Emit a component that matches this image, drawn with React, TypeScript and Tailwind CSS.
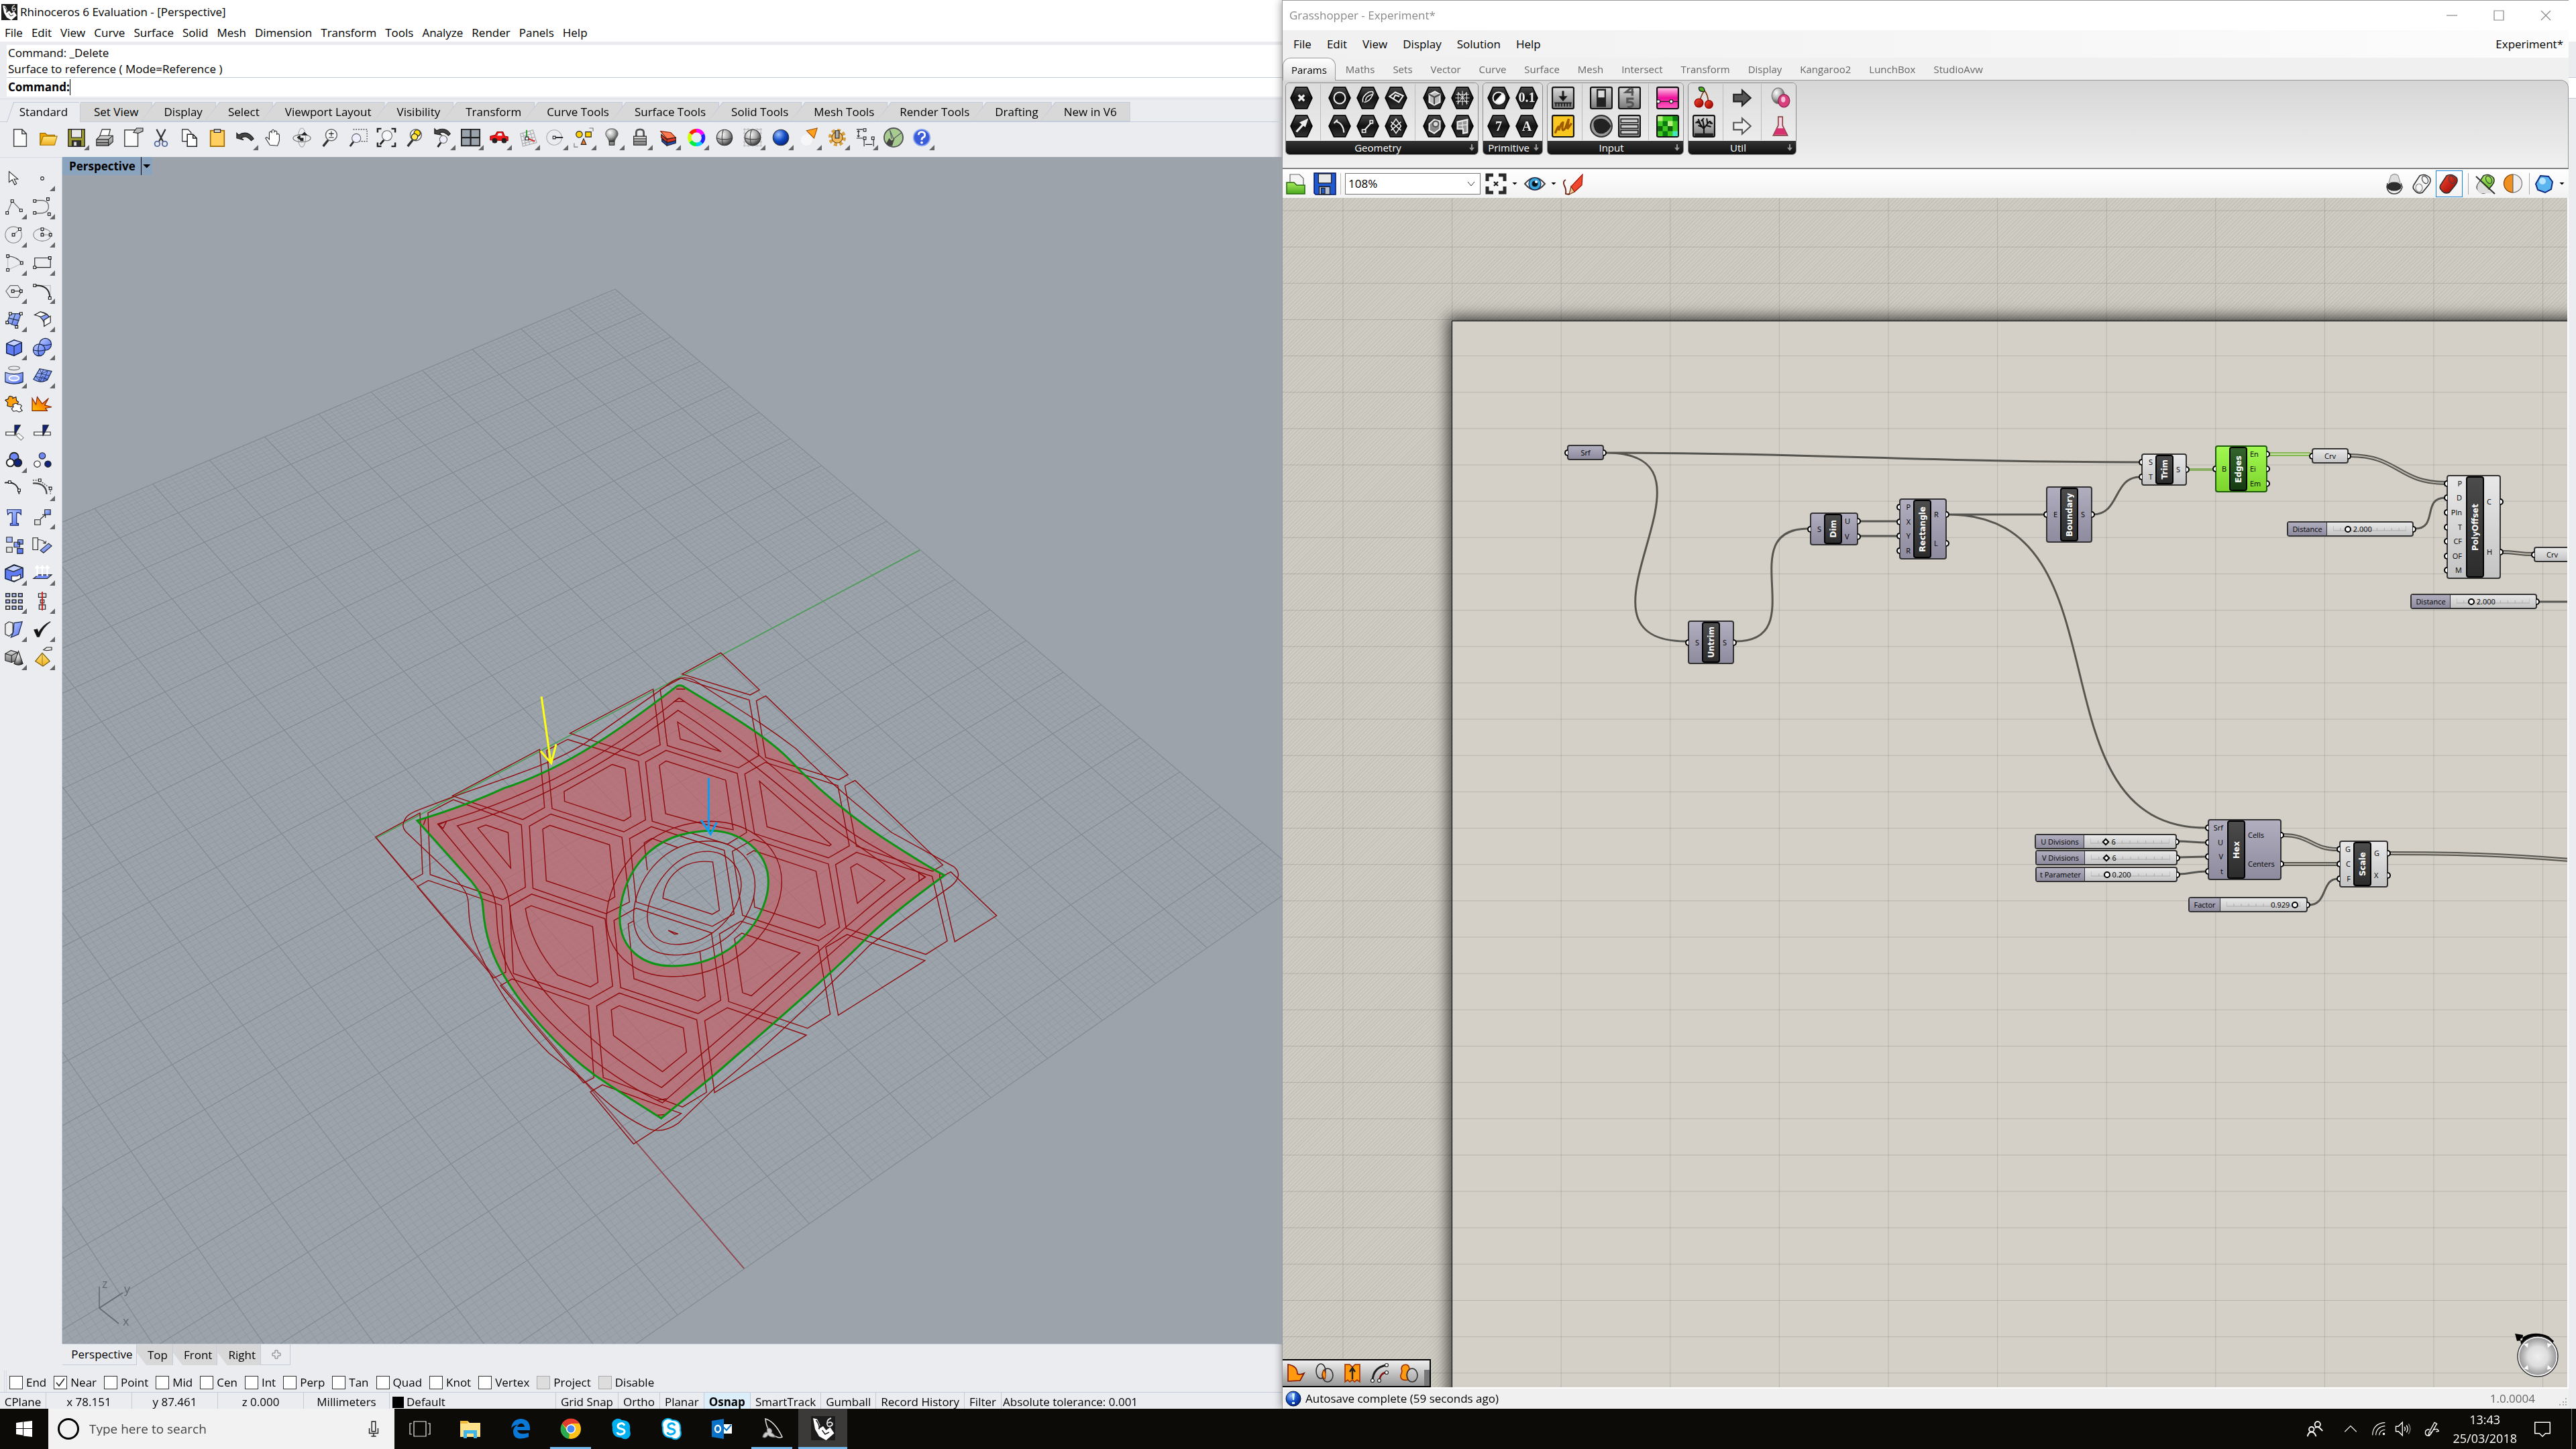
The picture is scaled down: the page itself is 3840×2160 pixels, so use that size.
import type { ReactNode } from 'react';

const Icon = ({ children, size = 'size-8' }: { children: ReactNode; size?: string }) => (
  <svg viewBox="0 0 32 32" className={`${size} shrink-0 overflow-visible`} fill="none" stroke="#222" strokeWidth="1.2">
    {children}
  </svg>
);

// shared gradients
const Defs = () => (
  <svg className="absolute size-0" aria-hidden="true">
    <defs>
      <radialGradient id="gray" cx=".35" cy=".3" r=".8"><stop offset="0" stopColor="#fff" /><stop offset=".5" stopColor="#aaa" /><stop offset="1" stopColor="#222" /></radialGradient>
      <radialGradient id="blue" cx=".35" cy=".3" r=".8"><stop offset="0" stopColor="#9cc0ff" /><stop offset=".5" stopColor="#1450c8" /><stop offset="1" stopColor="#001a70" /></radialGradient>
      <linearGradient id="peri" x1="0" y1="0" x2="1" y2="1"><stop offset="0" stopColor="#bfceff" /><stop offset="1" stopColor="#4f6ff0" /></linearGradient>
      <linearGradient id="fire" x1="0" y1="1" x2="1" y2="0"><stop offset="0" stopColor="#ffc400" /><stop offset="1" stopColor="#f04010" /></linearGradient>
      <linearGradient id="steel" x1="0" y1="0" x2="0" y2="1"><stop offset="0" stopColor="#ddd" /><stop offset="1" stopColor="#777" /></linearGradient>
      <linearGradient id="hex" x1="0" y1="0" x2="0" y2="1"><stop offset="0" stopColor="#4a4a4a" /><stop offset=".5" stopColor="#111" /><stop offset="1" stopColor="#333" /></linearGradient>
      <linearGradient id="gold" x1="0" y1="0" x2="0" y2="1"><stop offset="0" stopColor="#ffe680" /><stop offset="1" stopColor="#f0b020" /></linearGradient>
      <linearGradient id="green" x1="0" y1="0" x2="0" y2="1"><stop offset="0" stopColor="#a8ec60" /><stop offset="1" stopColor="#4aa81c" /></linearGradient>
      <linearGradient id="pink" x1="0" y1="0" x2="0" y2="1"><stop offset="0" stopColor="#ffd0ec" /><stop offset=".5" stopColor="#f0109c" /><stop offset="1" stopColor="#ff60c0" /></linearGradient>
      <linearGradient id="red" x1="0" y1="0" x2="1" y2="1"><stop offset="0" stopColor="#ff4a30" /><stop offset="1" stopColor="#8c0000" /></linearGradient>
      <radialGradient id="dial"><stop offset="0" stopColor="#eee" /><stop offset=".5" stopColor="#ddd" /><stop offset="1" stopColor="#8c8c8c" /></radialGradient>
    </defs>
  </svg>
);

const Magnifier = () => (
  <>
    <path d="M13 20 5 30" stroke="#333" strokeWidth="3.5" />
    <circle cx="18" cy="12" r="9" fill="#f6f8fa" stroke="#666" strokeWidth="1.6" />
  </>
);
const Sphere = ({ fill = 'url(#gray)' }: { fill?: string }) => (
  <>
    <circle cx="16" cy="16" r="12.5" fill={fill} stroke="#333" />
    {fill === 'url(#gray)' && <path d="M4 17q12 4 24 0M14 4q-4 12 0 24" stroke="#444" />}
  </>
);

type Tool = { name: string; more?: boolean; art: ReactNode };

const standardTools: Tool[] = [
  { name: 'New', art: <path d="M6 3h13l7 7v20H6zM19 3v7h7" fill="#fafafa" stroke="#444" strokeWidth="1.6" /> },
  { name: 'Open', art: <><path d="M3 28V9h8l3 3h12v4" fill="#f0a800" stroke="#8a6200" /><path d="m3 28 5-14h22l-4 14z" fill="url(#gold)" stroke="#a87800" /></> },
  { name: 'Save', more: true, art: <><path d="M3 3h26v27H3z" fill="#9a9a30" stroke="#333" strokeWidth="1.6" /><path d="M8 3h16v13H8z" fill="#e8e8e8" /><path d="M9 21h14v9H9z" fill="#333" /><path d="M12 23h4v6h-4z" fill="#ddd" stroke="none" /></> },
  { name: 'Print', art: <><path d="m8 14 4-11h13l-3 11z" fill="#fff" /><path d="m3 19 6-6h20v10l-7 6H3z" fill="url(#steel)" /><path d="M3 19h19l7-6M22 19v10M3 24h19" /></> },
  { name: 'Properties', art: <><path d="M3 4h16l5 6v20H3z" fill="#fafafa" stroke="#444" strokeWidth="1.6" /><path d="m17 8 5-7h10v5l-7 3z" fill="#bbb" /></> },
  { name: 'Cut', art: <><path d="M9 3 19 22M23 3 13 22" stroke="#333" strokeWidth="2.4" /><circle cx="10" cy="26" r="4" stroke="#5568a0" strokeWidth="2" /><circle cx="22" cy="26" r="4" stroke="#5568a0" strokeWidth="2" /></> },
  { name: 'Copy', art: <><path d="M5 3h9l5 5v14H5z" fill="#fafafa" /><path d="M13 11h9l6 6v13H13zM22 11v6h6" fill="#fff" strokeWidth="1.6" /></> },
  { name: 'Paste', art: <><path d="M5 5h22v25H5z" fill="#ffcf60" stroke="#a06a00" strokeWidth="1.8" /><path d="M11 3h10v5H11z" fill="#ccc" /></> },
  { name: 'Undo', more: true, art: <path d="M2 17V9l3 3q14-9 24 6l-4 3q-8-10-16-4l4 3z" fill="#444" stroke="#222" /> },
  { name: 'Pan', art: <path d="M10 28 3 17q2-3 6 2V8q2-3 4 0V5q2-3 4 0v2q2-3 4 0v4q3-2 4 1v9l-3 8z" fill="#fff" stroke="#333" /> },
  { name: 'Rotate View', art: <><ellipse cx="16" cy="16" rx="6" ry="15" stroke="#aaa" /><ellipse cx="16" cy="17" rx="14" ry="6" stroke="#777" /><path d="m9 16 4-3v6zM20 8l4 4h-8zM14 17h4v4h-4z" fill="#222" /></> },
  { name: 'Zoom Dynamic', art: <><Magnifier /><path d="M14 10h8M18 6v8M14 16h8" stroke="#222" /></> },
  { name: 'Zoom Window', art: <><path d="M8 3h22v19H18" stroke="#333" strokeDasharray="2 2" /><path d="M9 22 3 30" stroke="#333" strokeWidth="3" /><circle cx="13" cy="17" r="7" fill="#eef" stroke="#666" /></> },
  { name: 'Zoom Extents', art: <><path d="M2 8V2h6M24 2h6v6M2 24v6h6M24 30h6v-6" stroke="#222" strokeWidth="2.6" /><path d="M12 20 6 27" strokeWidth="3" /><circle cx="17" cy="13" r="8" fill="#f6f8fa" stroke="#666" /></> },
  { name: 'Zoom Selected', art: <><Magnifier /><circle cx="20" cy="9" r="5" fill="#ffd800" /><circle cx="16" cy="15" r="5" fill="#ffe850" /></> },
  { name: 'Undo View', more: true, art: <><path d="M3 10V2l3 3q14-7 22 5l-3 3q-8-8-14-4l3 3z" fill="#444" /><path d="m13 24-5 7" strokeWidth="3" /><circle cx="17" cy="19" r="6" fill="#eef" stroke="#666" /></> },
  { name: 'Four Viewports', more: true, art: <><path d="M1 3h29v26H1z" fill="#9aa2ac" strokeWidth="2" /><path d="M1 16h29M15.500 3v26" strokeWidth="2.400" /></> },
  { name: 'Car', more: true, art: <><path d="M2 20v-6l8-2 3-5h9l3 7 5 1v6z" fill="#f01818" stroke="#900" /><circle cx="9" cy="21" r="3.500" fill="#222" /><circle cx="24" cy="21" r="3.500" fill="#222" /><path d="M15 9h5l1 4h-8z" fill="#dff" stroke="none" /></> },
  { name: 'Set CPlane', more: true, art: <><path d="m5 10 20-6 6 20-22 6zM9 9l5 20M14 7l6 20M20 5l6 20M6 15l21-6M7 21l21-6M8 26l21-6" stroke="#aaa" /><path d="M15 17V4" stroke="#2a9a2a" strokeWidth="2" /><path d="m15 17 13 5" stroke="#d22" strokeWidth="2" /><path d="M13 15h5v5h-5z" fill="#fff" /></> },
  { name: 'Set View', more: true, art: <><circle cx="14" cy="16" r="12" stroke="#aaa" /><path d="M14 16h14" strokeWidth="2" /><path d="M12 14h4v4h-4z" fill="#fff" /></> },
  { name: 'Object Snap', more: true, art: <><circle cx="9" cy="11" r="5" fill="#ffd000" /><path d="M19 7h9v8h-9z" fill="#ffd000" /><path d="m12 27 4-9 4 9z" fill="#ea7a30" /><path d="M25 1h6v5M1 25v6h6" stroke="#777" /></> },
  { name: 'Lights', more: true, art: <><path d="M9 16q-4-4-2-9 3-5 9-5t9 5q2 5-2 9l-3 6h-8z" fill="url(#gray)" stroke="#666" /><path d="M12 22h8v6h-8z" fill="#888" /></> },
  { name: 'Lock', more: true, art: <><path d="M10 14V8q0-5 6-5t6 5v6" stroke="#555" strokeWidth="3" /><path d="M6 14h20v14H6z" fill="url(#steel)" /><path d="M6 18h20M6 22h20" stroke="#444" /></> },
  { name: 'Layers', more: true, art: <><path d="m4 6 16 2 8 8-14 2z" fill="#ff7a50" stroke="#902000" /><path d="m5 11 9 8v5l-9-8zM14 19l14-3v5l-14 3z" fill="#e03020" /><path d="m6 18 8 7v4l-8-7zM14 25l14-4v4l-14 4z" fill="#2848b0" /></> },
  { name: 'Object Properties', more: true, art: <g strokeWidth="6"><path d="M16 5a11 11 0 0 1 10 6" stroke="#f0f" /><path d="M26 11a11 11 0 0 1-2 13" stroke="#22f" /><path d="M24 24a11 11 0 0 1-8 3" stroke="#0cf" /><path d="M16 27a11 11 0 0 1-9-5" stroke="#0e4" /><path d="M7 22a11 11 0 0 1 0-12" stroke="#cf0" /><path d="M7 10a11 11 0 0 1 9-5" stroke="#f20" /></g> },
  { name: 'Shade', art: <Sphere /> },
  { name: 'Shade Selected', more: true, art: <><path d="M1 3h30M1 9h30M1 16h30M1 23h30M1 29h30M3 1v30M9 1v30M16 1v30M23 1v30M29 1v30" stroke="#bbb" /><Sphere /></> },
  { name: 'Render', more: true, art: <Sphere fill="url(#blue)" /> },
  { name: 'Spotlight', more: true, art: <><circle cx="12" cy="20" r="9" fill="#f6f6f8" stroke="none" /><path d="m12 5 17-4-5 16z" fill="#ffa020" stroke="#a05000" /></> },
  { name: 'Options', more: true, art: <><circle cx="16" cy="16" r="11" stroke="#d8a040" strokeWidth="6" strokeDasharray="5 3.600" /><circle cx="16" cy="16" r="8.500" fill="#f0b860" stroke="#7a5000" /><path d="M13 5h6v12h-6z" fill="#aaa" /></> },
  { name: 'Dimension', more: true, art: <><path d="M2 3h10M2 17h10M5 5v10M3 7l2-2 2 2M3 13l2 2 2-2M14 19v11M29 19v11M16 27h11" /><path d="M13 2h4v4h-4zM13 15h4v4h-4zM26 15h4v4h-4z" fill="#fff" /></> },
  { name: 'Grasshopper', art: <><circle cx="16" cy="16" r="15" fill="#a8cc90" stroke="#555" strokeWidth="2" /><path d="m4 26 5-9 4 4 5-4-2 5-2 7q-5 1-10-3z" fill="#444" stroke="none" /><path d="m13 18-3-14 6 14L29 8" stroke="#556" /></> },
  { name: 'Help', more: true, art: <><circle cx="16" cy="16" r="13" fill="#3a5cd8" stroke="#8ca4f0" strokeWidth="2" /><path d="M11 12q0-5 5-5t5 5q0 3-3 4-2 1-2 4" stroke="#fff" strokeWidth="3" /><circle cx="16" cy="24" r="2" fill="#fff" stroke="none" /></> },
];

const sq = (x: number, y: number) => <path d={`M${x - 2} ${y - 2}h4v4h-4z`} fill="#fff" stroke="#111" />;

const sideTools: Tool[] = [
  { name: 'Select', art: <path d="M8 5v17l5-4 4 8 3-2-4-7h6z" fill="#fff" /> },
  { name: 'Point', more: true, art: <circle cx="16" cy="16" r="2.500" fill="#fff" /> },
  { name: 'Polyline', more: true, art: <><path d="m5 26 8-19 14 15" stroke="#666" />{sq(5, 26)}{sq(13, 7)}{sq(27, 22)}</> },
  { name: 'Curve', more: true, art: <><path d="M4 7q22-4 22 9T4 26" stroke="#555" />{sq(4, 7)}{sq(25, 4)}{sq(4, 26)}{sq(27, 28)}</> },
  { name: 'Circle', more: true, art: <><circle cx="15" cy="16" r="13" stroke="#888" /><path d="m15 16 10-9" stroke="#888" />{sq(15, 16)}{sq(25, 7)}</> },
  { name: 'Ellipse', more: true, art: <><ellipse cx="16" cy="16" rx="14" ry="10" stroke="#888" /><path d="M16 7v9h13" stroke="#888" />{sq(16, 7)}{sq(16, 16)}{sq(29, 16)}</> },
  { name: 'Arc', more: true, art: <><path d="M6 5v22l22-10" stroke="#bbb" /><path d="M6 5q16 1 22 12" stroke="#444" />{sq(6, 5)}{sq(6, 27)}{sq(28, 16)}</> },
  { name: 'Rectangle', more: true, art: <><path d="M4 8h25v15H4z" />{sq(28, 8)}{sq(4, 23)}</> },
  { name: 'Polygon', more: true, art: <><path d="m3 16 7-9h12l6 9-6 10H10z" stroke="#666" /><path d="M14 16h13" />{sq(14, 16)}{sq(27, 16)}</> },
  { name: 'Fillet', more: true, art: <><path d="M4 7h25v20" stroke="#bbb" /><path d="M4 7q24-1 24 20" strokeWidth="2" />{sq(4, 7)}{sq(28, 27)}</> },
  { name: 'Surface', more: true, art: <><path d="M10 7h17l-7 20-15-6z" fill="url(#peri)" stroke="#234" /><path d="m18 7-6 18M7 14l17 4" stroke="#234" />{sq(10, 7)}{sq(27, 7)}{sq(5, 21)}{sq(20, 28)}</> },
  { name: 'Loft', more: true, art: <><path d="m4 9 9-5q14 2 16 14l-10 9q0-9-4-12Q12 10 4 9z" fill="url(#peri)" /><path d="m4 9 9-5 10 4-9 4zM19 27V17l10-6v10z" fill="#fff" /></> },
  { name: 'Box', more: true, art: <><path d="m4 10 12-6 12 4v15l-12 6-12-4z" fill="#5f7cf2" stroke="#124" strokeWidth="1.600" /><path d="m5 10 11-5 11 3-11 5z" fill="#c4d0ff" stroke="none" /><path d="m4 10 12 4v15M16 14l12-6" stroke="#124" /></> },
  { name: 'Boolean', more: true, art: <><circle cx="21" cy="11" r="9.500" fill="url(#peri)" stroke="#124" /><circle cx="11" cy="20" r="9.500" fill="url(#peri)" stroke="#124" /><path d="M2 20q9 3 18 0M11 11q-3 9 0 18M12 11q9 3 18 0" stroke="#124" /></> },
  { name: 'Project', more: true, art: <><ellipse cx="16" cy="4" rx="9" ry="3" stroke="#777" /><path d="M2 11q14 5 28 0v15q-14 6-28 0z" fill="url(#peri)" stroke="#124" /><ellipse cx="16" cy="20" rx="8" ry="4" fill="#a9bcff" stroke="#fff" strokeWidth="2" /></> },
  { name: 'Mesh', more: true, art: <><path d="m12 5 19 4-7 14q-10 6-22-1z" fill="url(#peri)" stroke="#124" /><path d="m18 6-8 19M25 8l-8 18M9 12l18 4M5 17l19 5M12 5l3 8 10-5M5 17l8 8 3-8 8 5" stroke="#124" strokeWidth=".8" /></> },
  { name: 'Join', art: <><path d="m2 10 5-2q0-5 4-4t3 3l5-2 1 6 3 2-2 4-5 2-5 2-6-2 1-5z" fill="#ffa010" /><path d="m14 17 5-2 3 2q4-1 6 2l-2 4 3 4-5 2-4-2-5 1-3-4 3-3z" fill="#fff" /></> },
  { name: 'Explode', art: <path d="M0 27V7l6 10L8 5l8 11L26 7l-6 11 11 3-10 2 3 4z" fill="url(#fire)" stroke="#802000" /> },
  { name: 'Trim', art: <><path d="M3 16h16v5H3z" fill="#fff" /><path d="m19 21 4-3 8 7-4 4z" stroke="#888" fill="#fff" /><path d="M17 5h9l-9 15z" fill="#10247c" /></> },
  { name: 'Split', art: <><path d="M3 16h26v5H3z" fill="#fff" /><path d="M17 5h9l-9 17z" fill="#10247c" /></> },
  { name: 'Group', more: true, art: <><circle cx="16" cy="11" r="7" fill="#6f88f8" strokeWidth="2" /><circle cx="10" cy="20" r="6" fill="#fff" strokeWidth="2" /><circle cx="22" cy="20" r="6" fill="#10247c" strokeWidth="2" /></> },
  { name: 'Ungroup', art: <><circle cx="16" cy="9" r="5" fill="#6f88f8" /><circle cx="8" cy="22" r="5" fill="#fff" /><circle cx="25" cy="22" r="5" fill="#10247c" /></> },
  { name: 'Edit Points', art: <><path d="M1 7q22-3 23 18" strokeWidth="2" />{sq(9, 6)}{sq(24, 19)}</> },
  { name: 'Control Points', more: true, art: <><path d="M1 8q21-1 22 17" strokeWidth="2.400" stroke="#444" /><path d="M1 3h10l18 13v9" strokeDasharray="2 2" />{sq(12, 3)}{sq(29, 16)}</> },
  { name: 'Text', art: <path d="M5 5h22v8l-3-3h-4v17h3v3H10v-3h3V10H9l-3 3z" fill="url(#peri)" stroke="#102060" /> },
  { name: 'Move', more: true, art: <><path d="M4 21h9v8H4z" fill="#e4e4e4" /><path d="M20 5h9v8h-9z" fill="url(#peri)" /><path d="m13 20 8-7m-5 0h5v5" /></> },
  { name: 'Copy Objects', art: <g fill="url(#peri)"><path d="M4 4h9v8H4zM22 8h8v7h-8zM16 12h9v8h-9zM21 22h9v8h-9z" /><path d="M4 20h9v8H4z" fill="#e4e4e4" /></g> },
  { name: 'Rotate', art: <><path d="M1 5h8v19H1z" fill="#eee" /><path d="m13 25 13-11 5 4-13 11z" fill="url(#peri)" /><path d="M9 8q10 0 12 6m-4-1 4 1 1-4" /></> },
  { name: 'Solid Edit', more: true, art: <><path d="m2 10 14-7 14 5v15l-14 7-14-5z" fill="#5f7cf2" stroke="#124" strokeWidth="1.600" /><path d="m3 10 13-6 13 4-14 6z" fill="#c4d0ff" /><path d="M12 21h9l5-3v7l-10 4-4-1z" fill="#fff" /></> },
  { name: 'Extrude', more: true, art: <><path d="m2 25 8-6h21l-7 6z" fill="#6f88f8" /><path d="M8 21V6M16 21V6M24 21V6M5 9l3-4 3 4M13 9l3-4 3 4M21 9l3-4 3 4" stroke="#fff" strokeWidth="2.400" /></> },
  { name: 'Array', more: true, art: <g fill="#b4c2ff" strokeWidth="1.600"><path d="M3 4h6v5H3zM13 4h6v5h-6zM23 4h6v5h-6zM3 14h6v5H3zM13 14h6v5h-6zM23 14h6v5h-6zM13 24h6v5h-6zM23 24h6v5h-6z" /><path d="M3 24h6v5H3z" fill="#fff" /></g> },
  { name: 'Align', more: true, art: <><path d="M10 4h12v6H10zM13 14h6v5h-6zM11 22h10v7H11z" fill="#ddd" /><path d="M16 1v30" stroke="#d01818" strokeWidth="2" /></> },
  { name: 'Flow', more: true, art: <><path d="M2 8l6-4 6 2v16l-6 5-6-3z" fill="#eee" /><path d="m16 6 13-2-6 20-12 5 4-9z" fill="url(#peri)" stroke="#124" /></> },
  { name: 'Check', more: true, art: <path d="m3 17 5-1 2 6Q17 9 29 4 17 12 11 28H8z" fill="#111" /> },
  { name: 'Primitives', more: true, art: <><path d="m2 10 9-5 10 3v12l-9 4-10-3z" fill="url(#steel)" /><path d="m2 10 10 3 9-5M12 13v11" /><path d="m23 6 7 20q-7 4-14 0z" fill="url(#gray)" /></> },
  { name: 'Pyramid', more: true, art: <><path d="m5 22 11-13 12 13-11 8z" fill="url(#gold)" stroke="#6a5000" /><path d="M16 9v20" stroke="#a08020" /><path d="m18 4 5-4h8v4l-8 1z" fill="#eee" /></> },
];

const ToolButton = ({ tool }: { tool: Tool }) => (
  <button aria-label={tool.name} className="relative flex size-[42px] shrink-0 items-center justify-center">
    <Icon size="size-[30px]">{tool.art}</Icon>
    {tool.more && <span className="absolute right-0.5 bottom-0.5 size-2 bg-[#666] [clip-path:polygon(100%_0,100%_100%,0_100%)]" />}
  </button>
);

const rhinoMenu = ['File', 'Edit', 'View', 'Curve', 'Surface', 'Solid', 'Mesh', 'Dimension', 'Transform', 'Tools', 'Analyze', 'Render', 'Panels', 'Help'];
const rhinoTabs = ['Set View', 'Display', 'Select', 'Viewport Layout', 'Visibility', 'Transform', 'Curve Tools', 'Surface Tools', 'Solid Tools', 'Mesh Tools', 'Render Tools', 'Drafting', 'New in V6'];

const RhinoLogo = ({ className }: { className: string }) => (
  <svg viewBox="0 0 24 24" className={className}>
    <path d="M0 0h24v24H0z" fill="#1c1c1c" />
    <path d="m2 2 4 1 3 6-2 4 5-3 3 4 4-3 4 6-8 7-7-4-4-7z" fill="#fff" />
    <path d="M5 4q4 5 3 9M11 14l3 4 4-2" stroke="#1c1c1c" fill="none" />
    <path d="M20 2q-4 1-4 5t3 3q3-1 2-3-2-2-4 0" stroke="#ddd" fill="none" strokeWidth="1.300" />
  </svg>
);

// Construction plane (-1..1 on both axes) projected to viewport pixels
const project = (u: number, v: number) => {
  const w = 1 - 0.1333 * u + 0.1501 * v;
  const x = (560 + 401.2 * u + 1016.8 * v) / w - 92;
  const y = (1249 + 389.9 * u - 305.9 * v) / w - 234;
  return `${Math.round(x * 10) / 10} ${Math.round(y * 10) / 10}`;
};

const gridPath = (major: boolean) => {
  let d = '';
  for (let i = -100; i <= 100; i++) {
    if ((i % 10 === 0) !== major) continue;
    const t = i / 100;
    d += `M${project(t, -1)}L${project(t, 1)}M${project(-1, t)}L${project(1, t)}`;
  }
  return d;
};

const hole = 'M846 585C905 585 973 640 973 735C973 830 900 980 757 980C690 980 640 930 639 840C640 740 690 585 846 585Z';
const boundary =
  'M768 162Q776 157 785 166C860 225 960 300 1015 370C1080 460 1150 535 1230 605C1290 655 1330 690 1369 715C1300 780 1230 850 1185 910C1100 1020 960 1175 850 1300L732 1425C690 1390 640 1350 583 1299C500 1220 420 1100 382 1015C345 940 335 870 332 815C330 770 322 760 304 730L184 555C260 525 330 490 380 460C520 400 640 290 768 162Z';

const cells = [
  'M779 127L866 65L953 173L932 188Z', 'M946 205L967 191L1152 421L1131 436L967 371Z', 'M1145 453L1168 438L1365 685L1342 703L1171 630Z',
  'M1359 722L1383 705L1486 833L1392 909Z', 'M1325 964L1130 1124L1102 925L1150 888Z', 'M1058 1182L852 1350L830 1140L881 1102Z',
  'M777 1411L670 1500L573 1348L600 1327Z', 'M581 1306L558 1322L371 1037L397 1018L569 1096Z', 'M383 998L356 1015L184 748L209 730L373 803Z',
  'M196 711L171 729L90 603L190 533Z', 'M263 483L459 347L470 517L421 552Z', 'M527 300L714 171L730 334L683 365Z',
  'M208 533L265 494L418 568L427 750L376 786L213 713Z', 'M475 350L522 318L681 382L697 553L648 588L487 520Z', 'M730 172L777 139L930 203L952 365L906 401L746 336Z',
  'M436 571L484 536L644 604L661 793L608 827L444 753Z', 'M697 384L743 350L903 417L924 590L881 624L712 557Z', 'M920 419L966 385L1129 453L1155 629L1108 664L942 593Z',
  'M392 806L441 770L606 842L623 1039L571 1077L400 1002Z', 'M661 608L710 573L874 642L896 828L847 864L676 793Z', 'M892 645L940 610L1108 682L1133 867L1086 906L915 832Z',
  'M1124 684L1171 648L1341 718L1375 907L1327 946L1148 870Z', 'M587 1097L638 1059L812 1137L834 1349L780 1392L602 1306Z', 'M626 847L676 811L845 883L866 1080L815 1119L641 1043Z',
  'M863 886L911 849L1085 922L1112 1121L1061 1162L884 1084Z',
  // insets
  'M320 577L338 568L388 590L394 694Z', 'M514 470L622 391L651 403L664 543L648 556L515 499Z', 'M728 394L743 381L877 437L894 582L830 566L742 535Z',
  'M769 267L867 354L775 317Z', 'M953 440L1114 625L1110 629L970 573Z', 'M466 580L482 569L616 626L628 778L612 791L474 731Z',
  'M427 812L440 804L578 865L590 1028L573 1041L500 1007Q440 920 427 812Z', 'M620 1108L638 1096L782 1161L789 1232L735 1289L625 1183Z',
  'M1158 692L1172 681L1235 730L1173 797Z', 'M897 900L913 884L1044 942L935 1067L915 1058Z', 'M924 656L940 643L1080 703L1101 857L1087 869L942 808L940 775',
  'M671 848L658 857L671 1017L815 1082L831 1069L819 936', 'M736 782C740 720 780 665 848 676L863 817L847 829Z', 'M701 700L694 620L711 607L770 634',
  // offsets of the trimmed edge
  'M152 568C155 545 165 535 185 525L260 488C380 430 480 395 560 330L740 165Q780 120 812 150C900 225 960 270 1035 345C1100 430 1180 520 1250 590L1390 690Q1412 715 1385 745L1200 920C1100 1050 950 1240 850 1340L770 1440Q730 1475 695 1450C640 1415 600 1370 555 1310L480 1235C400 1130 340 1000 310 900C300 850 300 830 299 800C298 770 290 755 270 725L160 590Q152 580 152 568Z',
  'M230 565C400 500 580 400 772 197C960 350 1010 440 1120 550C1180 620 1260 660 1325 720C1200 830 1000 1080 735 1380C600 1300 420 1100 380 960C350 860 375 810 345 745Z',
  'M274 570C440 510 600 400 770 233C900 340 990 450 1100 560L1280 725C1150 850 1000 1050 733 1335C600 1240 450 1060 415 940C380 830 405 790 370 725Z',
  'M846 557C930 560 1003 630 1003 735C1003 850 910 1011 757 1011C660 1010 609 930 609 840C612 720 690 560 846 557Z',
  'M840 615C890 615 943 660 943 745C943 840 870 948 762 948C700 945 669 900 670 830C672 740 730 615 840 615Z',
  'M835 645C880 645 912 690 912 745C910 820 850 917 765 917C720 915 700 880 701 830C703 760 760 645 835 645Z',
  'M748 876L770 886L762 887ZM762 207L773 197L784 207ZM232 567L250 557L242 578ZM1311 708L1326 720L1312 732ZM722 1372L744 1368M766 171H786M198 568L204 546M1358 708V728M722 1416L742 1414',
];

const Viewport = () => (
  <div className="relative min-h-0 flex-1 overflow-hidden bg-[#9ca3ab]">
    <svg className="absolute inset-0 h-full w-full" fill="none">
      <path d={gridPath(false)} stroke="#9098a0" />
      <path d={gridPath(true)} stroke="#838b93" strokeWidth="1.300" />
      <path d="M468 1015 1016 1657" stroke="#96404a" strokeWidth="1.600" />
      <path d="M468 1015 1278 586" stroke="#4b9e56" strokeWidth="1.600" />
      <g transform="translate(407 706) scale(.6633 .5102)">
        <path d={boundary + hole} fill="#c45c62" fillOpacity=".65" fillRule="evenodd" />
        {cells.map((d) => (
          <path key={d} d={d} stroke="#8f0a0c" strokeWidth="1.400" vectorEffect="non-scaling-stroke" />
        ))}
        <path d={boundary + hole} stroke="#0c9412" strokeWidth="3" vectorEffect="non-scaling-stroke" />
        <path d="M463 193 484 385M461 352 485 388 496 332" stroke="#ffff10" strokeWidth="3" vectorEffect="non-scaling-stroke" />
        <path d="M839 430V585M822 554 843 595 857 560" stroke="#0c9cf0" strokeWidth="3" vectorEffect="non-scaling-stroke" />
      </g>
      <path d="M55 1716V1684M55 1716 90 1693M55 1716 84 1739" stroke="#666a70" strokeWidth="1.600" />
      <g fill="#666a70" fontSize="18" fontFamily="Open Sans, sans-serif">
        <text x="59" y="1686">z</text>
        <text x="92" y="1694">y</text>
        <text x="90" y="1742">x</text>
      </g>
    </svg>
    <button className="relative flex h-[27px] items-center bg-[#8aa4c0] pl-2.5 font-bold">
      Perspective
      <span className="ml-2 flex h-full w-[17px] items-center justify-center border-l border-black">
        <span className="h-1.5 w-3 bg-black [clip-path:polygon(0_0,100%_0,50%_100%)]" />
      </span>
    </button>
  </div>
);

const slanted = 'absolute inset-0 -z-10 bg-[#c3cad9] [clip-path:polygon(22px_0,100%_0,100%_100%,0_100%)]';
const slantedFill = 'absolute inset-px bg-[#d8d8d8] [clip-path:polygon(22px_0,100%_0,100%_100%,0_100%)]';

const snaps = ['End', 'Near', 'Point', 'Mid', 'Cen', 'Int', 'Perp', 'Tan', 'Quad', 'Knot', 'Vertex', 'Project', 'Disable'];

const Snap = ({ name }: { name: string }) => {
  const off = name === 'Project' || name === 'Disable';
  return (
    <label className="relative flex items-center gap-[5px]">
      <input
        type="checkbox"
        defaultChecked={name === 'Near'}
        disabled={off}
        className="peer size-5 appearance-none border border-[#333] bg-white disabled:border-[#aaa] disabled:bg-[#ddd]"
      />
      <svg viewBox="0 0 20 20" className="absolute left-0 hidden size-5 peer-checked:block" fill="none" stroke="#222" strokeWidth="1.600">
        <path d="m4 10 4 5 8-11" />
      </svg>
      {name}
    </label>
  );
};

const statusCell = 'flex items-center justify-center border-r border-[#c3cad9] pt-1';

const Rhino = () => (
  <section className="flex min-w-0 flex-col bg-[#ebecf0]">
    <div className="bg-white">
      <div className="flex h-9 items-center gap-1 pl-0.5">
        <RhinoLogo className="size-6" />
        <h1>Rhinoceros 6 Evaluation - [Perspective]</h1>
      </div>
      <nav className="flex h-[26px] items-center gap-[13px] pl-[7px]">
        {rhinoMenu.map((m) => <button key={m}>{m}</button>)}
      </nav>
    </div>
    <div className="mt-[5px] ml-[10px] flex h-[77px] flex-col bg-white leading-6">
      <p className="pl-0.5">Command: _Delete</p>
      <p className="pl-0.5">Surface to reference ( Mode=Reference )</p>
      <label className="flex flex-1 items-center border-t border-[#c3cad9] pl-0.5 font-bold">
        Command:
        <input autoFocus className="h-6 flex-1 border-l border-black font-normal outline-none" />
      </label>
    </div>
    <div className="mt-[3px] border-t border-[#d4d9e4] pt-1">
      <div className="isolate flex h-[30px] border-b border-[#c3cad9] pl-[10px]">
        <button className="relative isolate -mb-px h-[30px] w-[110px]">
          <span className="absolute inset-0 -z-10 rounded-tr-sm bg-[#c3cad9] [clip-path:polygon(10px_0,100%_0,100%_100%,0_100%)]" />
          <span className="absolute inset-x-px top-px bottom-0 -z-10 bg-[#ebecf0] [clip-path:polygon(10px_0,100%_0,100%_100%,0_100%)]" />
          Standard
        </button>
        {rhinoTabs.map((t, i) => (
          <button key={t} className={`relative isolate pr-5 ${i ? '-ml-[17px] pl-[35px]' : 'pl-5'}`}>
            {i ? (
              <span className={slanted}><span className={slantedFill} /></span>
            ) : (
              <span className="absolute inset-0 -z-10 border-t border-r border-[#c3cad9] bg-[#d8d8d8]" />
            )}
            {t}
          </button>
        ))}
      </div>
    </div>
    <div className="flex h-[52px] pt-0.5 pl-[9px]" role="toolbar" aria-label="Standard">
      {standardTools.map((t) => <ToolButton key={t.name} tool={t} />)}
    </div>
    <div className="flex min-h-0 flex-1">
      <div className="grid w-[93px] shrink-0 auto-rows-[42px] grid-cols-[42px_42px] border-t border-[#d4d9e4] border-r border-r-[#c3cad9] pt-2.5" role="toolbar" aria-label="Main">
        {sideTools.map((t) => <ToolButton key={t.name} tool={t} />)}
      </div>
      <Viewport />
    </div>
    <div className="ml-[93px] flex h-8 border-t border-[#c3cad9] text-center">
      <button className="w-[111px] border-r border-[#c3cad9] border-b pl-2">Perspective</button>
      {['Top', 'Front', 'Right'].map((t) => (
        <button key={t} className="relative isolate pr-2 pl-4">
          <span className="absolute inset-0 -z-10 border-r border-[#c3cad9] bg-[#d8d8d8] [clip-path:polygon(0_0,100%_0,100%_100%,14px_100%,0_40%)]" />
          {t}
        </button>
      ))}
      <button aria-label="New viewport" className="flex w-11 items-center justify-center border-r border-b border-[#c3cad9] pl-1">
        <svg viewBox="0 0 14 14" className="size-3.5" fill="none" stroke="#777"><path d="M5 1h4v4h4v4H9v4H5V9H1V5h4z" /></svg>
      </button>
    </div>
    <div className="mt-2 ml-1.5 flex h-8 items-center gap-[11px] border-l-4 border-double border-[#d4d9e4] pt-1 pl-1">
      {snaps.map((s) => <Snap key={s} name={s} />)}
    </div>
    <footer className="flex h-[25px] border-t border-[#c3cad9]">
      <span className={`${statusCell} w-[69px]`}>CPlane</span>
      <span className={`${statusCell} w-32`}>x 78.151</span>
      <span className={`${statusCell} w-32`}>y 87.461</span>
      <span className={`${statusCell} w-32`}>z 0.000</span>
      <span className={`${statusCell} w-32`}>Millimeters</span>
      <button className="flex w-[248px] items-center gap-1 border-r border-[#c3cad9] pt-1 pl-1"><span className="size-[17px] bg-black" />Default</button>
      {['Grid Snap', 'Ortho', 'Planar', 'Osnap', 'SmartTrack', 'Gumball', 'Record History', 'Filter'].map((s) => (
        <button key={s} className={`${statusCell} px-[7px] ${s === 'Osnap' ? 'bg-[#dceefa] font-bold' : ''}`}>{s}</button>
      ))}
      <span className="flex items-center pt-1 pl-0.5">Absolute tolerance: 0.001</span>
    </footer>
  </section>
);

const Hex = ({ children }: { children: ReactNode }) => (
  <>
    <path d="M8 1h16l7 15-7 15H8L1 16z" fill="url(#hex)" stroke="#000" strokeWidth="1.600" />
    <g stroke="#eee" strokeWidth="2">{children}</g>
  </>
);
const Plate = ({ children, fill = 'url(#steel)' }: { children?: ReactNode; fill?: string }) => (
  <><rect x="1" y="1" width="30" height="30" rx="2" fill={fill} stroke="#111" strokeWidth="2" />{children}</>
);
const glyph = { fill: '#eee', stroke: 'none', fontSize: 19, fontWeight: 700, fontFamily: 'Liberation Serif, serif', textAnchor: 'middle' as const };

// every group is a row of blocks, each block listing its icons row by row
const ribbon: { name: string; blocks: { cols: string; icons: [string, ReactNode][] }[] }[] = [
  {
    name: 'Geometry',
    blocks: [
      { cols: 'grid-cols-1', icons: [
        ['Point', <Hex><path d="m12 12 8 8m0-8-8 8" strokeWidth="3" /></Hex>],
        ['Vector', <Hex><path d="m9 24 10-11" strokeWidth="3" /><path d="m15 11 9-4-3 9z" fill="#eee" /></Hex>],
      ] },
      { cols: 'grid-cols-3', icons: [
        ['Circle', <Hex><circle cx="16" cy="16" r="8" /></Hex>],
        ['Curve', <Hex><path d="M9 22q-2-8 8-14 8-3 6 3-4 10-12 11M13 20q-1-6 9-9" strokeWidth="1.500" /></Hex>],
        ['Plane', <Hex><path d="m7 14 8-6 11 5-6 9z" /><path d="m12 18 3-6 6 2" /></Hex>],
        ['Arc', <Hex><path d="M10 9q11 3 12 16M8 12l5-5" /></Hex>],
        ['Line', <Hex><path d="m11 22 10-11" /><path d="M8 21h5v4H8zM19 8h4v4h-4z" fill="#333" strokeWidth="1.500" /></Hex>],
        ['Rectangle', <Hex><path d="m16 6 7 10-7 10-7-10zM9 10l14 12M23 10 9 22" strokeWidth="1.500" /></Hex>],
      ] },
      { cols: 'grid-cols-2', icons: [
        ['Brep', <Hex><path d="m9 11 8-4 7 4v11l-8 4-7-4z" fill="#bbb" /><path d="m9 11 7 4v10M16 15l8-4" stroke="#444" /></Hex>],
        ['Mesh', <Hex><path d="M10 8v17M16 6v20M22 8v17M7 11h18M6 16h20M7 21h18M10 8l13 16M22 8 9 24" strokeWidth="1" /></Hex>],
        ['Geometry', <Hex><path d="m9 13 7-6 8 2v11l-8 6-7-4z" fill="#888" /><circle cx="18" cy="13" r="4" fill="#ddd" stroke="#555" /></Hex>],
        ['Surface', <Hex><path d="m9 10 14-3v18l-6 1v-6H9z" fill="#999" /><path d="M16 8v12M9 15l14-1" strokeWidth="1" /></Hex>],
      ] },
    ],
  },
  {
    name: 'Primitive',
    blocks: [
      { cols: 'grid-cols-2', icons: [
        ['Boolean', <Hex><circle cx="16" cy="16" r="8" fill="#111" /><path d="M22 10a8 8 0 0 1-11 12z" fill="#fff" /></Hex>],
        ['Number', <Hex><text x="16" y="22" {...glyph}>0.1</text></Hex>],
        ['Integer', <Hex><text x="16" y="23" {...glyph}>7</text></Hex>],
        ['Text', <Hex><text x="16" y="23" {...glyph}>A</text></Hex>],
      ] },
    ],
  },
  {
    name: 'Input',
    blocks: [
      { cols: 'grid-cols-1', icons: [
        ['Number Slider', <Plate><path d="M16 6v10" strokeWidth="3" /><path d="m11 14 5 6 5-6z" fill="#111" /><path d="M4 23h24M6 23v5M10 23v5M14 23v5M18 23v5M22 23v5M26 23v5" strokeWidth="2" /></Plate>],
        ['Graph Mapper', <Plate fill="#f8c820"><path d="M5 26q6-16 5-4 4-12 6-11-3 16 3 8l5-13-2 14 6-8" stroke="#a05a00" strokeWidth="3" /></Plate>],
      ] },
      { cols: 'grid-cols-2', icons: [
        ['Boolean Toggle', <Plate><path d="M10 4h12v24H10z" fill="#222" /><path d="M11 5h10v11H11z" fill="#ddd" /></Plate>],
        ['Value List', <Plate><path d="m18 2-7 6h11M20 2v11M22 17h-9v5q8-1 8 3t-8 4" stroke="#555" strokeWidth="3" /></Plate>],
        ['Control Knob', <><circle cx="16" cy="16" r="15" fill="#999" stroke="#333" strokeWidth="2" /><path d="M16 6q8 0 13 10-5 10-13 10T6 16 16 6" fill="#222" /></>],
        ['Panel', <Plate><path d="M4 6h24v5H4zM4 14h24v5H4zM4 22h24v5H4z" fill="#ccc" strokeWidth="1.500" /></Plate>],
      ] },
      { cols: 'grid-cols-1', icons: [
        ['Gradient', <Plate fill="url(#pink)"><path d="M1 21h30" /><circle cx="3" cy="21" r="2.500" fill="#fff" /><circle cx="21" cy="21" r="2.500" fill="#fff" /></Plate>],
        ['Image Sampler', <Plate fill="#3ecb20"><g stroke="none"><path d="M2 2h7v7H2zM16 9h7v7h-7z" fill="#b8f080" /><path d="M9 9h7v7H9zM23 2h7v7h-7zM9 23h7v7H9z" fill="#0a7a10" /><path d="M16 16h7v7h-7zM2 16h7v7H2z" fill="#106010" /><path d="M23 23h7v7h-7z" fill="#40e8c0" /></g></Plate>],
      ] },
    ],
  },
  {
    name: 'Util',
    blocks: [
      { cols: 'grid-cols-1', icons: [
        ['Cherry Picker', <><path d="M10 20Q14 8 17 6q5 6 5 16" stroke="#7a3a10" strokeWidth="1.600" /><path d="M17 7Q8 8 9 1q8-2 8 6" fill="#4ab020" /><circle cx="9" cy="23" r="6" fill="url(#red)" stroke="#900" /><circle cx="23" cy="25" r="5.500" fill="url(#red)" stroke="#900" /></>],
        ['Param Viewer', <Plate><path d="M16 28V16M16 20l-7-9M16 19l8-10M16 17 14 6M9 11H4M24 9l4 4M11 13 8 6M21 13l-1-8M24 12h4M8 15l5 2M12 9l4-4M19 15l7 2M6 9l3 2" strokeWidth="2" stroke="#111" /><path d="M3 28h26" strokeWidth="4" /></Plate>],
      ] },
      { cols: 'grid-cols-1', icons: [
        ['Data', <path d="M4 11h12V5l12 11-12 11v-6H4z" fill="#555" stroke="#222" strokeWidth="2" />],
        ['Data Output', <path d="M4 11h12V5l12 11-12 11v-6H4z" fill="#eee" stroke="#555" strokeWidth="2" />],
      ] },
      { cols: 'grid-cols-1', icons: [
        ['Galapagos', <><ellipse cx="13" cy="13" rx="9" ry="11" fill="url(#gray)" stroke="#777" /><ellipse cx="21" cy="20" rx="8" ry="9" fill="#d8407c" stroke="#902050" /><ellipse cx="20" cy="18" rx="3" ry="4" fill="#f8c0d8" stroke="none" /></>],
        ['Flask', <><path d="M13 3h6v12l7 14H6l7-14z" fill="#f6d8e4" stroke="#844" strokeWidth="1.600" /><path d="M11 19h10l4 9H7z" fill="#d83070" stroke="none" /></>],
      ] },
    ],
  },
];

const ghTabs = ['Maths', 'Sets', 'Vector', 'Curve', 'Surface', 'Mesh', 'Intersect', 'Transform', 'Display', 'Kangaroo2', 'LunchBox', 'StudioAvw'];

const Caret = () => <span className="h-1 w-2 bg-black [clip-path:polygon(0_0,100%_0,50%_100%)]" />;

const Ribbon = () => (
  <div className="flex h-[132px] items-start gap-1.5 rounded-tr-xl border-t border-r border-b border-[#999] bg-linear-to-b from-[#d6d6d6] to-[#f0f0f0] pt-[3px] pl-1">
    {ribbon.map((group) => (
      <section key={group.name} className="flex h-[108px] flex-col overflow-hidden rounded-md border border-[#8c8c8c]">
        <div className="flex flex-1 items-center divide-x divide-[#bbb] bg-linear-to-b from-[#dcdcdc] to-[#ececec] px-0.5">
          {group.blocks.map((b, i) => (
            <div key={i} className={`grid ${b.cols} ${i ? 'pl-[7px]' : ''} ${i < group.blocks.length - 1 ? 'pr-[7px]' : ''}`}>
              {b.icons.map(([name, art]) => (
                <button key={name} aria-label={name} className="flex size-[42px] items-center justify-center">
                  <Icon size="size-[34px]">{art}</Icon>
                </button>
              ))}
            </div>
          ))}
        </div>
        <h2 className="relative flex h-5 items-center justify-center bg-linear-to-b from-[#333] to-[#111] pr-3 text-[15px] text-white">
          {group.name}
          <svg viewBox="0 0 10 12" className="absolute right-1 h-3 w-2.5" fill="#999"><path d="M4 1h2v5h3l-4 5-4-5h3z" /></svg>
        </h2>
      </section>
    ))}
  </div>
);

const Cylinder = ({ fill }: { fill: string }) => (
  <>
    <path d="M3 18 12 4q8-4 15 3 3 5-2 11l-9 11q-7 3-12-4-3-3-1-7z" fill={fill} stroke="#333" strokeWidth="1.600" />
    <ellipse cx="20" cy="10" rx="4" ry="6" transform="rotate(-30 20 10)" stroke="#444" />
  </>
);

const CanvasToolbar = () => (
  <div className="flex h-11 items-center border-t border-[#666] bg-linear-to-b from-white to-[#f2f2f2] pl-1">
    <button aria-label="Open file"><Icon><path d="M7 2h14l6 6v12H7z" fill="#f4f4f4" stroke="#666" /><path d="M2 31V14h11l4 4h12v13z" fill="url(#green)" stroke="#2a6a10" strokeWidth="1.600" /></Icon></button>
    <button aria-label="Save file" className="ml-2.5"><Icon size="size-[34px]"><path d="M1 1h30v30H3l-2-2z" fill="#2058d0" stroke="#0a2070" strokeWidth="1.600" /><path d="M7 2h18v13H7z" fill="#e8e8e8" /><path d="M8 20h15v11H8z" fill="#b8c0d0" /><path d="M11 22h5v8h-5z" fill="#2058d0" /></Icon></button>
    <span className="mx-1.5 h-8 border-l border-[#bbb]" />
    <span className="relative flex h-8 w-[202px] items-center">
      <select aria-label="Zoom" defaultValue="108%" className="h-8 w-full appearance-none border border-[#777] bg-white px-1">
        <option>108%</option>
      </select>
      <svg viewBox="0 0 12 8" className="pointer-events-none absolute right-2 h-2 w-3" fill="none" stroke="#333"><path d="m1 1 5 6 5-6" /></svg>
    </span>
    <button aria-label="Zoom extents" className="ml-[7px] flex items-center gap-2"><Icon><path d="M3 12V3h9M20 3h9v9M29 20v9h-9M12 29H3v-9" stroke="#2a2a2a" strokeWidth="5" /><path d="m13 13 6 6m0-6-6 6" strokeWidth="2.400" /></Icon><Caret /></button>
    <button aria-label="Preview" className="ml-2.5 flex items-center gap-2"><Icon><path d="M1 16Q16-2 31 16 16 34 1 16z" fill="#f4f4f4" stroke="#444" strokeWidth="2" /><circle cx="16" cy="16" r="9" fill="#38a8dc" stroke="#125" /><circle cx="16" cy="16" r="4" fill="#012" /><circle cx="18" cy="13" r="2" fill="#fff" stroke="none" /></Icon><Caret /></button>
    <button aria-label="Sketch" className="ml-2"><Icon><path d="m31 2-1 16-11 10-5-8z" fill="#f04830" stroke="#a01000" /><path d="m14 20 5 8-8 4z" fill="#e8c890" stroke="#803010" /><path d="M6 10q-5 2-2 9 3 5 2 12 4 1 6 0" stroke="#6a1808" strokeWidth="1.800" /></Icon></button>
    <div className="ml-auto flex items-center pr-1.5">
      <button aria-label="No preview" className="mr-2.5"><Icon><path d="m8 14 3-10q6-5 11 0l3 10z" fill="#ddd" stroke="#999" /><path d="m6 15-1 6q2 10 11 10t12-10l-2-6" fill="#eee" stroke="#444" strokeWidth="1.600" /><ellipse cx="16" cy="20" rx="10" ry="6" fill="#2c2c2c" /></Icon></button>
      <button aria-label="Wireframe preview" className="mr-1"><Icon><Cylinder fill="#f6f6f6" /><ellipse cx="11" cy="22" rx="5" ry="6" stroke="#888" /></Icon></button>
      <button aria-label="Shaded preview" className="flex size-10 items-center justify-center border border-[#1883d7]"><Icon><Cylinder fill="url(#red)" /></Icon></button>
      <span className="mr-2.5 ml-2 h-8 border-l border-[#aaa]" />
      <button aria-label="Selected preview" className="mr-2"><Icon><Cylinder fill="url(#green)" /><path d="m3 18 4-6 18 18H8q-7-4-5-12z" fill="#ddd" stroke="none" /><path d="m1 5 28 26" stroke="#333" strokeWidth="2" /></Icon></button>
      <button aria-label="Document preview"><Icon><path d="M16 2a13 13 0 0 0 0 27z" fill="#f09020" stroke="#804000" /><path d="M16 2a13 13 0 0 1 0 27z" fill="#eee" stroke="#777" /></Icon></button>
      <span className="mr-1.5 ml-2 h-8 border-l border-[#aaa]" />
      <button aria-label="Mesh quality" className="flex items-center gap-1.5"><Icon><path d="m10 4 12 1 6 8-2 11-9 5-11-4-3-9z" fill="#5ab4f0" stroke="#102a80" strokeWidth="2" /><circle cx="13" cy="12" r="5" fill="#b8e4ff" stroke="none" /></Icon><Caret /></button>
    </div>
  </div>
);

// top left corner of the canvas on the desktop; component positions are desktop pixels
const ORIGIN = { x: 1912, y: 295 };
const place = (x: number, y: number, w: number, h: number) => ({ left: x - ORIGIN.x, top: y - ORIGIN.y, width: w, height: h });

const gripLeft = 'absolute -left-[6px] h-2.5 w-[5px] rounded-l-full border-2 border-r-0 border-black bg-white';
const gripRight = 'absolute -right-[6px] h-2.5 w-[5px] rounded-r-full border-2 border-l-0 border-black bg-white';

const tones = {
  hidden: 'border-[#333] bg-linear-to-b from-[#b0aebf] to-[#8d8b9d]',
  visible: 'border-[#333] bg-linear-to-b from-[#e8e8e8] to-[#c4c4c4]',
  selected: 'border-[#1d5a0a] bg-linear-to-b from-[#a0f850] to-[#7cd42c]',
};

type Component = { name: string; x: number; y: number; w: number; h: number; tone: keyof typeof tones; ins: string[]; outs: string[]; wide?: boolean };

const components: Component[] = [
  { name: 'Untrim', x: 2516, y: 925, w: 69, h: 65, tone: 'hidden', ins: ['S'], outs: ['S'] },
  { name: 'Dim', x: 2698, y: 764, w: 72, h: 49, tone: 'hidden', ins: ['S'], outs: ['U', 'V'] },
  { name: 'Rectangle', x: 2831, y: 743, w: 71, h: 91, tone: 'hidden', ins: ['P', 'X', 'Y', 'R'], outs: ['R', 'L'] },
  { name: 'Boundary', x: 3050, y: 725, w: 69, h: 84, tone: 'hidden', ins: ['E'], outs: ['S'] },
  { name: 'Trim', x: 3192, y: 676, w: 68, h: 48, tone: 'visible', ins: ['S', 'T'], outs: ['S'] },
  { name: 'Edges', x: 3302, y: 664, w: 78, h: 70, tone: 'selected', ins: ['B'], outs: ['En', 'Ei', 'Em'] },
  { name: 'PolyOffset', x: 3647, y: 708, w: 81, h: 155, tone: 'visible', ins: ['P', 'D', 'Pln', 'T', 'CF', 'OF', 'M'], outs: ['C', 'H'], wide: true },
  { name: 'Hex', x: 3291, y: 1221, w: 110, h: 91, tone: 'hidden', ins: ['Srf', 'U', 'V', 't'], outs: ['Cells', 'Centers'], wide: true },
  { name: 'Scale', x: 3487, y: 1253, w: 73, h: 70, tone: 'visible', ins: ['G', 'C', 'F'], outs: ['G', 'X'] },
];

const ComponentNode = ({ c }: { c: Component }) => (
  <div className={`absolute flex rounded-[4px] border-2 ${tones[c.tone]}`} style={place(c.x, c.y, c.w, c.h)}>
    <div className={`flex flex-col ${c.wide ? 'w-[27px] pr-1.5' : 'w-[19px] pr-1'}`}>
      {c.ins.map((p) => (
        <span key={p} className="relative flex flex-1 items-center justify-end"><span className={gripLeft} />{p}</span>
      ))}
    </div>
    <div className={`flex w-[27px] items-center justify-center rounded-[4px] border-2 border-black bg-linear-to-b font-['DejaVu_Sans',sans-serif] text-[12px] font-bold text-white ${c.tone === 'selected' ? 'from-[#34642c] to-[#153c12]' : 'from-[#4c4c4c] to-[#2c2c2c]'}`}>
      <span className="rotate-180 [writing-mode:vertical-rl]">{c.name}</span>
    </div>
    <div className="flex flex-1 flex-col pl-1">
      {c.outs.map((p) => (
        <span key={p} className="relative flex flex-1 items-center"><span className={gripRight} />{p}</span>
      ))}
    </div>
  </div>
);

const params = [
  { id: 'srf', name: 'Srf', x: 2336, y: 663, w: 55, tone: tones.hidden },
  { id: 'crv1', name: 'Crv', x: 3446, y: 668, w: 55, tone: tones.visible },
  { id: 'crv2', name: 'Crv', x: 3777, y: 815, w: 55, tone: tones.visible },
];

type Slider = { id: string; name: string; x: number; y: number; w: number; label: string; value: string; at: number; whole?: boolean; before?: boolean };
const sliders: Slider[] = [
  { id: 'd1', name: 'Distance', x: 3409, y: 777, w: 189, label: 'w-[58px]', value: '2.000', at: 20 },
  { id: 'd2', name: 'Distance', x: 3593, y: 885, w: 189, label: 'w-[58px]', value: '2.000', at: 20 },
  { id: 'u', name: 'U Divisions', x: 3033, y: 1243, w: 212, label: 'w-[72px]', value: '6', at: 20, whole: true },
  { id: 'v', name: 'V Divisions', x: 3034, y: 1267, w: 212, label: 'w-[72px]', value: '6', at: 20, whole: true },
  { id: 't', name: 't Parameter', x: 3034, y: 1292, w: 212, label: 'w-[72px]', value: '0.200', at: 20 },
  { id: 'f', name: 'Factor', x: 3262, y: 1337, w: 178, label: 'w-[46px]', value: '0.929', at: 93, before: true },
];

const thumb = '[&::-webkit-slider-thumb]:appearance-none [&::-webkit-slider-thumb]:border-2 [&::-webkit-slider-thumb]:border-black [&::-webkit-slider-thumb]:bg-white';
const roundThumb = '[&::-webkit-slider-thumb]:size-2.5 [&::-webkit-slider-thumb]:rounded-full';
const diamondThumb = '[&::-webkit-slider-thumb]:size-2 [&::-webkit-slider-thumb]:rotate-45';

const SliderNode = ({ s }: { s: Slider }) => (
  <div className={`absolute flex items-stretch rounded-[4px] border-2 ${tones.visible}`} style={place(s.x, s.y, s.w, 23)}>
    <label htmlFor={s.id} className={`flex shrink-0 items-center justify-center border-r border-[#333] bg-linear-to-b from-[#b0aebf] to-[#8d8b9d] ${s.label}`}>{s.name}</label>
    <div className="relative mx-[9px] flex-1">
      <svg className="absolute inset-0 h-full w-full" stroke="#aaa">
        {Array.from({ length: 11 }, (_, i) => (
          <line key={i} x1={`${i * 10}%`} x2={`${i * 10}%`} y1={i % 10 ? 8 : 5} y2="12" />
        ))}
        <line x1="0" x2="100%" y1="12" y2="12" />
      </svg>
      <input
        id={s.id}
        type="range"
        defaultValue={s.at}
        className={`absolute -left-[5px] h-full w-[calc(100%+10px)] appearance-none ${thumb} ${s.whole ? diamondThumb : roundThumb}`}
      />
      <output
        className={`pointer-events-none absolute inset-y-0 flex items-center ${s.before ? 'mr-2' : 'ml-2'}`}
        style={s.before ? { right: `${100 - s.at}%` } : { left: `${s.at}%` }}
      >
        {s.value}
      </output>
    </div>
    <span className={`${gripRight} top-[5px]`} />
  </div>
);

const wires = [
  'M2394 675C2700 675 2880 689 3190 689', 'M2394 675C2594 675 2314 956 2514 956', 'M2587 956C2704 956 2579 788 2696 788',
  'M2904 767C3180 767 3020 1234 3289 1234', 'M3120 767C3160 767 3150 711 3190 711',
  'M3600 788C3635 788 3610 742 3645 742', 'M3784 897H3830', 'M3246 1254C3265 1254 3270 1256 3289 1256', 'M3248 1278C3265 1278 3270 1277 3289 1277',
  'M3248 1303C3265 1303 3270 1299 3289 1299', 'M3442 1349C3470 1349 3460 1310 3485 1310', 'M2772 777H2829', 'M2772 799H2829', 'M2904 767H3048',
];
const listWires = [
  'M3503 679C3575 679 3575 720 3645 720', 'M3730 823C3750 823 3755 826 3776 826', 'M3403 1245C3445 1245 3445 1266 3485 1266',
  'M3403 1288H3485', 'M3562 1272C3660 1272 3730 1274 3830 1282',
];

const lines = (count: number, start: number, step: number) => Array.from({ length: count }, (_, i) => start + i * step);

const Canvas = () => (
  <div className="relative min-h-0 flex-1 overflow-hidden border-r-2 border-white bg-[repeating-linear-gradient(135deg,#c6c3ba_0_2px,#d0cdc4_2px_4px)] font-['Open_Sans','Noto_Sans',sans-serif] text-[11px] text-black">
    <div className="absolute top-[183px] -right-10 -bottom-10 left-[252px] border border-black bg-[#d4d0c8] shadow-[0_0_20px_6px_rgba(0,0,0,.65)]" />
    <svg className="absolute inset-0 h-full w-full" fill="none">
      <g stroke="#000" strokeOpacity=".13">
        {lines(12, 90, 162.6).map((x) => <line key={x} x1={x} x2={x} y1="0" y2="100%" />)}
        {lines(33, 19, 54.15).map((y) => <line key={y} y1={y} y2={y} x1="0" x2="100%" />)}
      </g>
      <g transform={`translate(${-ORIGIN.x} ${-ORIGIN.y})`}>
        <path d={wires.join('')} stroke="#57554f" strokeWidth="3" />
        <path d={listWires.join('')} stroke="#57554f" strokeWidth="6" />
        <path d={listWires.join('')} stroke="#bcb8b0" strokeWidth="2" />
        <path d="M3262 700H3300" stroke="#88b060" strokeWidth="4" />
        <path d="M3382 677H3444" stroke="#86b850" strokeWidth="6" />
        <path d="M3382 677H3444" stroke="#d0dcb8" strokeWidth="2" />
      </g>
    </svg>
    {params.map((p) => (
      <div key={p.id} className={`absolute flex items-center justify-center rounded-[4px] border-2 ${p.tone}`} style={place(p.x, p.y, p.w, 23)}>
        <span className={gripLeft} />{p.name}<span className={gripRight} />
      </div>
    ))}
    {components.map((c) => <ComponentNode key={c.name} c={c} />)}
    {sliders.map((s) => <SliderNode key={s.id} s={s} />)}

    <div className="absolute bottom-0 left-0 flex h-[42px] w-[221px] items-center gap-[10px] border-2 border-l-0 border-black bg-linear-to-b from-[#f0f0f0] to-[#999] pl-1">
      <Icon><path d="M4 28V3q14 2 14 14 4 2 10-1L22 27z" fill="#ff9a10" stroke="#801000" strokeWidth="1.600" /></Icon>
      <Icon><ellipse cx="11" cy="13" rx="7" ry="11" stroke="#333" strokeWidth="1.600" /><ellipse cx="21" cy="19" rx="8" ry="10" stroke="#333" strokeWidth="1.600" /><path d="M15 11q5 4 2 14-6-4-2-14" fill="#ff9a10" stroke="#a03000" /></Icon>
      <Icon><path d="M5 3h7l4 4 4-4h7v26l-4-3-4 3-3-3-4 3-3-3-4 3z" fill="#ff9a10" stroke="#a03000" strokeWidth="1.600" /><path d="M16 25V10m-4 4 4-6 4 6" strokeWidth="2.400" /></Icon>
      <Icon><path d="M4 27Q5 7 25 4" strokeWidth="3" /><path d="M14 27q2-12 11-12" stroke="#801010" strokeWidth="2.400" /><circle cx="4" cy="27" r="2.500" fill="#fff" /><circle cx="25" cy="4" r="2.500" fill="#fff" /><circle cx="14" cy="27" r="2.500" fill="#fff" /><circle cx="25" cy="15" r="2.500" fill="#fff" /></Icon>
      <Icon><path d="M8 4q8-3 9 6-6 5-2 16-12 2-11-7 3-6 1-9 0-4 3-6z" fill="#ff9a10" stroke="#a03000" strokeWidth="1.600" /><ellipse cx="21" cy="19" rx="8" ry="10" stroke="#333" strokeWidth="1.600" /></Icon>
      <span className="absolute right-0 bottom-0 h-6 w-2 bg-[#777]" />
    </div>
    <svg viewBox="0 0 70 70" className="absolute right-3 bottom-3 size-[70px]">
      <path d="m4 2 12 2-1 8-8 1zM13 18Q34-4 60 16l2-3-8-7Q30-4 12 10z" fill="#000" />
      <circle cx="38" cy="36" r="30" fill="url(#dial)" stroke="#333" strokeWidth="1.500" />
      <circle cx="38" cy="36" r="28.500" fill="none" stroke="#fff" strokeWidth="1.500" />
      <path d="m17 18 7-2-1 7zM59 18l-7-2 1 7zM17 54l7 2-1-7zM59 54l-7 2 1-7z" fill="#fff" />
    </svg>
  </div>
);

const Grasshopper = () => (
  <section className="flex min-w-0 flex-col border-t border-l border-[#999] bg-[#f0f0f0] shadow-[0_0_12px_rgba(0,0,0,.45)]">
    <div className="flex h-11 items-center bg-white px-2.5 text-[#888]">
      <h1 className="flex-1">Grasshopper - Experiment*</h1>
      <div className="flex gap-[54px] pr-4">
        {['M0 8h16', 'M1 1h14v14H1z', 'm1 1 14 14M15 1 1 15'].map((d, i) => (
          <button key={d} aria-label={['Minimize', 'Maximize', 'Close'][i]}>
            <svg viewBox="0 0 16 16" className="size-4" fill="none" stroke="#888" strokeWidth="1.200"><path d={d} /></svg>
          </button>
        ))}
      </div>
    </div>
    <nav className="flex h-[41px] items-center gap-[23px] bg-linear-to-r from-[#f0f0f0] to-[#fcfcfc] pr-2 pl-4">
      {['File', 'Edit', 'View', 'Display', 'Solution', 'Help'].map((m) => <button key={m}>{m}</button>)}
      <button className="ml-auto">Experiment*</button>
    </nav>
    <div className="relative flex h-[33px] items-center gap-[27px] text-[15px] text-[#666]">
      <button className="-mr-3 -mb-px h-[34px] rounded-t-xl border border-b-0 border-[#999] bg-linear-to-b from-white to-[#e0e0e0] px-3 text-black">Params</button>
      {ghTabs.map((t) => <button key={t}>{t}</button>)}
    </div>
    <Ribbon />
    <CanvasToolbar />
    <Canvas />
    <footer className="relative flex h-8 items-center gap-1.5 border-t-2 border-white pl-1">
      <svg viewBox="0 0 24 24" className="size-6"><circle cx="12" cy="12" r="11" fill="url(#blue)" stroke="#013" /><path d="M10 4h4l-1 10h-2zM10 17h4v3h-4z" fill="#dff" /></svg>
      Autosave complete (59 seconds ago)
      <span className="mr-[50px] ml-auto text-[#666]">1.0.0004</span>
      <svg viewBox="0 0 12 12" className="absolute right-0.5 bottom-1 size-3" fill="#aaa"><path d="M9 0h2v2H9zM9 5h2v2H9zM9 9h2v2H9zM5 5h2v2H5zM5 9h2v2H5zM0 9h2v2H0z" /></svg>
    </footer>
  </section>
);

const taskbarApps: { name: string; open?: boolean; art: ReactNode }[] = [
  { name: 'Task View', art: <g stroke="#eee"><path d="M7 5h18v22H7zM4 8H1v16h3M28 8h3v16h-3" /></g> },
  { name: 'File Explorer', art: <g stroke="none"><path d="M1 4h11l3 3h16v21H1z" fill="#ffe28a" /><path d="M1 4h11v4H1z" fill="#f0b838" /><path d="M6 30V18h20v12h-5v-7H11v7z" fill="#3fb4e8" /></g> },
  { name: 'Edge', art: <path d="M2 15Q4 1 17 1q14 1 13 17H11q2 8 17 4v6q-23 8-23-9 1-7 7-9-6 0-10 5zM11 13h11q-1-5-5-5t-6 5z" fill="#0a78d6" stroke="none" /> },
  { name: 'Chrome', open: true, art: <g stroke="none"><circle cx="16" cy="16" r="15" fill="#fbc116" /><path d="M3 8a15 15 0 0 1 26 0H16l-5 8z" fill="#e33b2e" /><path d="M3 8 14 24l-1 7A15 15 0 0 1 3 8z" fill="#2da94f" /><circle cx="16" cy="16" r="7" fill="#fff" /><circle cx="16" cy="16" r="5.500" fill="#4587f4" /></g> },
  { name: 'Skype', art: <><path d="M9 1q5-1 8 2 14 0 12 15 3 10-5 13-5 1-8-2Q2 29 3 14 0 4 9 1z" fill="#00aff0" stroke="none" /><path d="M21 11q-2-4-6-3t-4 4 5 4 5 4-5 4-6-3" stroke="#fff" strokeWidth="3" /></> },
  { name: 'Skype for Business', art: <><path d="M9 1q5-1 8 2 14 0 12 15 3 10-5 13-5 1-8-2Q2 29 3 14 0 4 9 1z" fill="#fff" stroke="#00aff0" strokeWidth="2" /><path d="M21 11q-2-4-6-3t-4 4 5 4 5 4-5 4-6-3" stroke="#00aff0" strokeWidth="3" /></> },
  { name: 'Outlook', art: <g stroke="none"><path d="M16 9h15v14H16z" fill="#fff" /><path d="m17 12 6 6 7-8" stroke="#0a72c8" strokeWidth="2" /><path d="M1 4 19 1v30L1 28z" fill="#0a72c8" /><ellipse cx="10" cy="16" rx="4" ry="5" stroke="#fff" strokeWidth="2.400" /></g> },
  { name: 'Grasshopper', open: true, art: <><path d="M6 1q14 4 25 27-4 2-8 0Q8 22 6 1z" stroke="#ddd" strokeWidth="1.600" /><path d="M2 28q2-8 7-7-2-7 3-6 5 2 3 7 3 1 6 6-8 1-11-3-4 6-8 3z" fill="#ccc" stroke="#777" /></> },
];

const Taskbar = () => (
  <footer className="relative flex h-[60px] shrink-0 items-stretch bg-[#0d0b08] text-white">
    <button aria-label="Start" className="flex w-[72px] items-center justify-center">
      <svg viewBox="0 0 24 24" className="size-6" fill="#fff"><path d="m0 3 10-1.500V11H0zM11 1.400 24 0v11H11zM0 12h10v9.500L0 20zM11 12h13v12l-13-1.500z" /></svg>
    </button>
    <label className="flex w-[516px] items-center bg-[#f2f2f2] pr-[22px] pl-3.5 text-[#333]">
      <span className="size-8 shrink-0 rounded-full border-[3px] border-black" />
      <input placeholder="Type here to search" className="ml-[15px] flex-1 text-[19px] outline-none placeholder:text-[#444]" />
      <svg viewBox="0 0 18 26" className="h-6 w-[18px]" fill="none" stroke="#222" strokeWidth="1.600"><path d="M6 1h6v16H6zM2 12v8h14v-8M9 20v5M5 25h8" /></svg>
    </label>
    {taskbarApps.map((a) => (
      <button key={a.name} aria-label={a.name} className="relative flex w-[75px] items-center justify-center">
        <Icon>{a.art}</Icon>
        {a.open && <span className="absolute bottom-0 h-[3px] w-[61px] bg-[#76b9ed]" />}
      </button>
    ))}
    <button aria-label="Rhinoceros" className="relative ml-0.5 flex w-[73px] items-center justify-center border-b-[3px] border-[#76b9ed] bg-[#3c3a38]">
      <RhinoLogo className="size-9" />
    </button>
    <div className="ml-auto flex items-center pr-[38px]">
      <button aria-label="People" className="mr-[31px]"><Icon size="size-6"><g stroke="#fff" strokeWidth="2.400"><circle cx="21" cy="7" r="5.500" /><circle cx="9" cy="17" r="5" /><path d="M1 31q2-9 8-9t9 9M16 14q5-4 9 0t6 6" /></g></Icon></button>
      <button aria-label="Show hidden icons" className="mr-[22px]"><Icon size="size-5"><path d="m2 23 14-14 14 14" stroke="#fff" strokeWidth="2" /></Icon></button>
      <button aria-label="Network" className="mr-3.5"><Icon size="size-5"><g stroke="#fff" strokeWidth="1.800"><path d="M1 31Q2 3 31 1M9 31Q10 11 31 9M17 31q1-12 14-13" /><circle cx="28" cy="28" r="2" fill="#fff" /></g></Icon></button>
      <button aria-label="Volume" className="mr-5"><Icon size="size-6"><g stroke="#fff" strokeWidth="1.800"><path d="M2 11h5l8-8v26l-8-8H2zM19 12q3 4 0 8M23 9q5 7 0 14" /><path d="M27 6q7 10 0 20" stroke="#888" /></g></Icon></button>
      <button aria-label="Pen" className="mr-5"><Icon size="size-[22px]"><g stroke="#fff" strokeWidth="2"><path d="m10 24 12-22 5 3-13 22-5 3zM11 17q-9 0-9 7t8 7q5-3 4-9M20 18q9-4 11 3-4 1-6 1" /></g></Icon></button>
      <time className="mr-[26px] text-center text-[18px] leading-7">13:43<br />25/03/2018</time>
      <button aria-label="Notifications"><Icon size="size-6"><path d="M1 3h30v22h-9l-6 6-6-6H1z" stroke="#fff" strokeWidth="2" /></Icon></button>
    </div>
    <span className="absolute right-1.5 h-[60px] border-l border-[#777]" />
  </footer>
);

export default function App() {
  return (
    <div className="flex h-screen flex-col overflow-hidden font-['Open_Sans','Noto_Sans',sans-serif] text-[17px] leading-5 text-black">
      <Defs />
      <main className="grid min-h-0 flex-1 grid-cols-[1911fr_1918fr_11px]">
        <Rhino />
        <Grasshopper />
        <div className="bg-[#ebecf0]">
          <div className="h-[62px] bg-white" />
          <div className="mt-[53px] h-8 border-y border-[#c3cad9] bg-white" />
        </div>
      </main>
      <Taskbar />
    </div>
  );
}
